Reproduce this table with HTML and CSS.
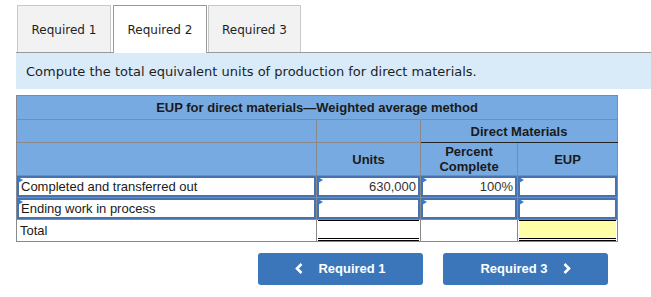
FILE: index.html
```html
<!DOCTYPE html>
<html>
<head>
<meta charset="utf-8">
<link rel="stylesheet" href="styles.css">
</head>
<body>
<div class="page">
  <div class="tabs">
    <div class="tab">Required 1</div>
    <div class="tab active">Required 2</div>
    <div class="tab">Required 3</div>
  </div>
  <div class="banner">Compute the total equivalent units of production for direct materials.</div>

  <table class="eup">
    <colgroup>
      <col class="c1"><col class="c2"><col class="c3"><col class="c4">
    </colgroup>
    <tr class="h1"><th colspan="4">EUP for direct materials—Weighted average method</th></tr>
    <tr class="h2"><th></th><th></th><th colspan="2" class="dm">Direct Materials</th></tr>
    <tr class="h3"><th></th><th>Units</th><th>Percent<br>Complete</th><th>EUP</th></tr>
    <tr class="row">
      <td class="in"><div class="inp left"><span class="mark"></span>Completed and transferred out</div></td>
      <td class="in"><div class="inp num"><span class="mark"></span>630,000</div></td>
      <td class="in"><div class="inp num"><span class="mark"></span>100%</div></td>
      <td class="in"><div class="inp"><span class="mark"></span></div></td>
    </tr>
    <tr class="row">
      <td class="in"><div class="inp left"><span class="mark"></span>Ending work in process</div></td>
      <td class="in"><div class="inp num"><span class="mark"></span></div></td>
      <td class="in"><div class="inp num"><span class="mark"></span></div></td>
      <td class="in"><div class="inp"><span class="mark"></span></div></td>
    </tr>
    <tr class="row total">
      <td class="label">Total</td>
      <td class="in"><div class="tot"></div></td>
      <td></td>
      <td class="in"><div class="tot yellow"></div></td>
    </tr>
  </table>

  <div class="nav">
    <button class="btn"><svg width="8" height="11" viewBox="0 0 8 11"><path d="M6.5 1 L2 5.5 L6.5 10" fill="none" stroke="#fff" stroke-width="2.6"/></svg><span>Required 1</span></button>
    <button class="btn"><span>Required 3</span><svg width="8" height="11" viewBox="0 0 8 11"><path d="M1.5 1 L6 5.5 L1.5 10" fill="none" stroke="#fff" stroke-width="2.6"/></svg></button>
  </div>
</div>
</body>
</html>
```

FILE: styles.css
```css
html, body { margin: 0; padding: 0; background: #fff; }
.page { padding: 5px 0 0 16px; }

.tabs {
  display: flex;
  align-items: flex-end;
  border-bottom: 1px solid #9a9a9a;
  padding-left: 1px;
  height: 47px;
}
.tab {
  box-sizing: border-box;
  width: 94px;
  height: 47px;
  margin-right: 2px;
  padding-top: 2px;
  background: #f2f2f2;
  border: 1px solid #c8c8c8;
  border-bottom: none;
  font-family: "DejaVu Sans", Verdana, sans-serif;
  font-size: 12px;
  color: #1e1e1e;
  display: flex;
  align-items: center;
  justify-content: center;
}
.tab.active {
  background: #fff;
  border-color: #9a9a9a;
  height: 48px;
  margin-bottom: -1px;
  margin-right: 1px;
  padding-bottom: 1px;
}
.tab:last-child { width: 93px; }

.banner {
  height: 36px;
  background: #d9ebf9;
  font-family: "DejaVu Sans", Verdana, sans-serif;
  font-size: 13px;
  color: #1e1e1e;
  padding-left: 10px;
  display: flex;
  align-items: center;
}

.eup {
  margin-top: 6px;
  border-collapse: collapse;
  table-layout: fixed;
  width: 602px;
  font-family: "Liberation Sans", Arial, sans-serif;
  font-size: 13px;
  color: #1a1a1a;
}
.c1 { width: 300px; }
.c2 { width: 104px; }
.c3 { width: 97px; }
.c4 { width: 100px; }

.eup th, .eup td {
  border: 1px solid #8a8a8a;
  padding: 0;
}
.eup th {
  background: #78aae2;
  font-weight: bold;
  text-align: center;
  line-height: 15px;
}
.h1 th { height: 23px; }
.h2 th { height: 22px; }
.h2 th.dm { border-bottom: 1px solid #222; }
.h3 th { height: 32px; }

.row td { height: 21px; }
.eup td.in { padding: 0; }
.inp {
  position: relative;
  box-sizing: border-box;
  height: 21px;
  border: 2px solid #4673b0;
  background: #fff;
  line-height: 17px;
  padding: 0 2px;
  white-space: nowrap;
}
.inp.num { text-align: right; color: #333; }
.inp.left { padding-left: 2px; }
.mark {
  position: absolute;
  left: -1px;
  top: -1px;
  width: 0;
  height: 0;
  border-top: 3px solid transparent;
  border-bottom: 3px solid transparent;
  border-left: 5px solid #3a7bd0;
}
.eup td.label { padding-left: 3px; }
.tot {
  box-sizing: border-box;
  height: 21px;
  margin: 0 1px;
  border-top: 1px solid #000;
  border-bottom: 3px double #000;
}
.tot.yellow { background: #ffffa8; }

.nav {
  display: flex;
  gap: 20px;
  margin-top: 11px;
  padding-left: 242px;
}
.btn {
  width: 165px;
  height: 32px;
  border: none;
  border-radius: 3px;
  background: #3a76b9;
  color: #fff;
  font-family: "Liberation Sans", Arial, sans-serif;
  font-weight: bold;
  font-size: 13px;
  display: flex;
  align-items: center;
  justify-content: center;
  gap: 15px;
  padding: 0 0 1px 0;
}
```
